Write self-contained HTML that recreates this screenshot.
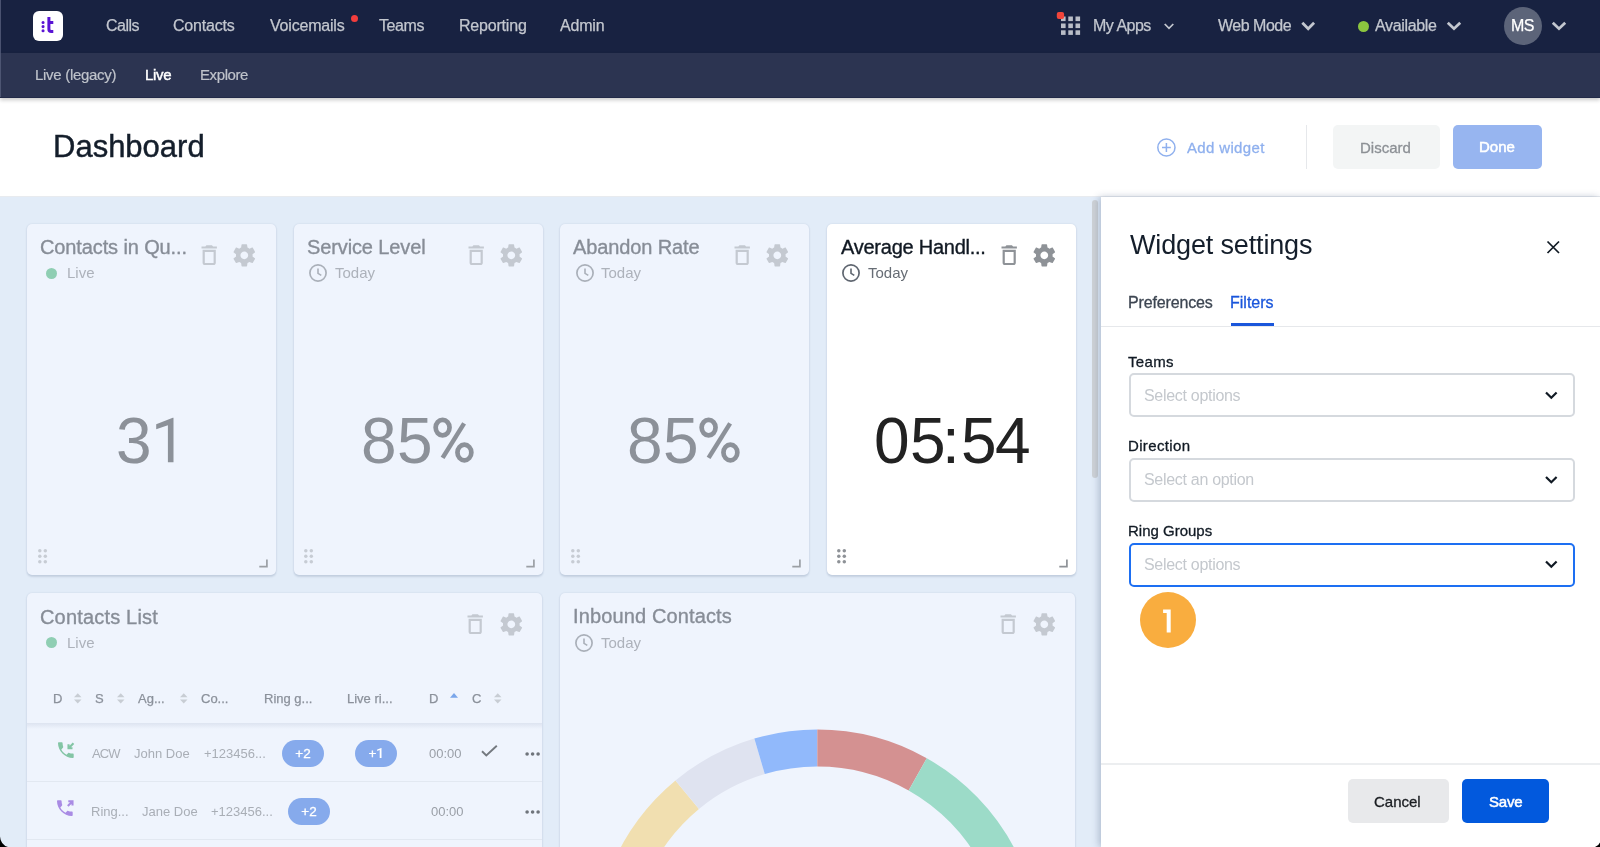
<!DOCTYPE html>
<html><head><meta charset="utf-8">
<style>
*{box-sizing:border-box;margin:0;padding:0}
html,body{width:1600px;height:847px;overflow:hidden;background:#e2ecf8;font-family:"Liberation Sans",sans-serif}
.a{position:absolute}
.t{position:absolute;white-space:nowrap;line-height:1;will-change:transform}
svg{position:absolute;overflow:visible}
#nav{left:0;top:0;width:1600px;height:53px;background:#182241}
#sub{left:0;top:53px;width:1600px;height:44.5px;background:#2c3451;box-shadow:0 2px 4px rgba(0,0,0,.22);z-index:2;border-bottom:1px solid #222a48}
.nv{font-size:16px;color:#c3c7cf;letter-spacing:-0.2px;-webkit-text-stroke:0.25px currentColor}
.sv{font-size:15px;color:#bfc3cb;letter-spacing:-0.3px;-webkit-text-stroke:0.2px currentColor}
#hdr{left:0;top:97px;width:1600px;height:100px;background:#fff;border-bottom:1px solid #e8ebef}
.card{position:absolute;background:#eff4fd;border-radius:5px;box-shadow:0 0 2px rgba(50,70,110,.11),0 1.5px 2px rgba(50,70,110,.15)}
.ttl{font-size:20px;color:#878d97;letter-spacing:-0.12px;-webkit-text-stroke:0.35px currentColor}
.sub2{font-size:15px;color:#adb2bb}
.big{font-size:64px;color:#8c9199}
#panel{left:1101.4px;top:197px;width:498.6px;height:650px;background:#fff;box-shadow:-2px 0 7px rgba(40,60,100,.28)}
.lbl{font-size:15px;color:#111a24;-webkit-text-stroke:0.3px currentColor}
.inp{position:absolute;left:27.5px;width:446.5px;height:44px;border:2px solid #d5d9de;border-radius:5px;background:#fff}
.ph{font-size:16px;color:#c4c8cd;letter-spacing:-0.3px}
.th{font-size:13px;color:#8b919b;-webkit-text-stroke:0.25px currentColor}
.td{font-size:13px;color:#a9aeb6}
.pill{position:absolute;height:26.5px;width:42px;border-radius:14px;background:#86aaec;color:#fff;font-size:13.5px;text-align:center;line-height:28px;-webkit-text-stroke:0.3px #fff;will-change:transform}
</style></head><body>

<!-- top nav -->
<div id="nav" class="a">
  <div class="a" style="left:0;top:0;width:1px;height:53px;background:#4a5270"></div>
  <div class="a" style="left:33px;top:11px;width:30px;height:29.5px;background:#fff;border-radius:6px"></div>
  <svg style="left:0;top:0" width="80" height="53"><path d="M44.6 22.5a1.55 1.55 0 1 1-3.1 0a1.55 1.55 0 1 1 3.1 0M44.6 26.6a1.55 1.55 0 1 1-3.1 0a1.55 1.55 0 1 1 3.1 0M44.6 30.7a1.55 1.55 0 1 1-3.1 0a1.55 1.55 0 1 1 3.1 0" fill="#5a14d4"/><path d="M48.9 16.9V29.2q0 2.3 2.3 2.3H53.3M47.4 22.5H53.3" fill="none" stroke="#5a14d4" stroke-width="3"/></svg>
  <svg style="left:1056px;top:11px;fill:#b9bdc7" width="26" height="26"><rect x="5" y="5.5" width="4.6" height="4.6"/><rect x="12.3" y="5.5" width="4.6" height="4.6"/><rect x="19.5" y="5.5" width="4.6" height="4.6"/><rect x="5" y="12.5" width="4.6" height="4.6"/><rect x="12.3" y="12.5" width="4.6" height="4.6"/><rect x="19.5" y="12.5" width="4.6" height="4.6"/><rect x="5" y="19.3" width="4.6" height="4.6"/><rect x="12.3" y="19.3" width="4.6" height="4.6"/><rect x="19.5" y="19.3" width="4.6" height="4.6"/><rect x="0.8" y="1" width="7.3" height="7" rx="2" fill="#f0453b"/></svg>
  <svg style="left:0;top:0" width="1600" height="53"><g fill="none" stroke="#c3c7cf" stroke-linecap="square"><path d="M1165.3 24.6L1169 28.3 1172.7 24.6" stroke-width="1.7"/><path d="M1303.3 23.8L1308.2 28.7 1313.1 23.8" stroke-width="2.8"/><path d="M1448.8 23.8L1454 28.7 1459.2 23.8" stroke-width="2.8"/><path d="M1553.8 23.8L1559 28.7 1564.2 23.8" stroke-width="2.8"/></g></svg>
  <div class="t nv" style="left:105.8px;top:18px;letter-spacing:-0.5px">Calls</div>
  <div class="t nv" style="left:172.5px;top:18px">Contacts</div>
  <div class="t nv" style="left:269.5px;top:18px">Voicemails</div>
  <div class="a" style="left:350.5px;top:14.5px;width:7px;height:7px;border-radius:50%;background:#f23d3d"></div>
  <div class="t nv" style="left:379.3px;top:18px;letter-spacing:-0.4px">Teams</div>
  <div class="t nv" style="left:458.5px;top:18px">Reporting</div>
  <div class="t nv" style="left:560px;top:18px">Admin</div>
  <div class="t nv" style="left:1093px;top:18px;letter-spacing:-0.5px">My Apps</div>
  <div class="t nv" style="left:1217.8px;top:18px;letter-spacing:-0.5px">Web Mode</div>
  <div class="a" style="left:1358px;top:20.5px;width:11px;height:11px;border-radius:50%;background:#8cc63f"></div>
  <div class="t nv" style="left:1375px;top:18px;letter-spacing:-0.35px">Available</div>
  <div class="a" style="left:1504px;top:6.5px;width:38px;height:38px;border-radius:50%;background:#5c6479"></div>
  <div class="t" style="left:1511px;top:17.6px;font-size:16px;color:#fff;letter-spacing:-0.6px;-webkit-text-stroke:0.25px #fff">MS</div>
</div>

<!-- sub nav -->
<div id="sub" class="a">
  <div class="a" style="left:0;top:0;width:1px;height:44px;background:#4d5572"></div>
  <div class="t sv" style="left:35px;top:14.1px">Live (legacy)</div>
  <div class="t sv" style="left:144.5px;top:14.1px;color:#fff;-webkit-text-stroke:0.45px #fff">Live</div>
  <div class="t sv" style="left:200px;top:14.1px;letter-spacing:-0.4px">Explore</div>
</div>

<!-- header -->
<div id="hdr" class="a">
  <div class="t" style="left:53px;top:33.5px;font-size:31px;color:#141e2b;-webkit-text-stroke:0.45px currentColor">Dashboard</div>
  <svg style="left:1157px;top:41px" width="20" height="20"><circle cx="9.4" cy="9.5" r="8.6" fill="none" stroke="#8fb0ee" stroke-width="1.5"/><path d="M9.4 5.1V13.9M5 9.5H13.8" stroke="#8fb0ee" stroke-width="1.5"/></svg>
  <div class="t" style="left:1187px;top:42.5px;font-size:15px;color:#8fb0ee;letter-spacing:0.35px;-webkit-text-stroke:0.3px currentColor">Add widget</div>
  <div class="a" style="left:1306px;top:28px;width:1px;height:44px;background:#e6e8eb"></div>
  <div class="a" style="left:1333px;top:28px;width:107px;height:44px;border-radius:5px;background:#f3f5f5"></div>
  <div class="t" style="left:1359.5px;top:42.5px;font-size:15px;color:#8c9095;-webkit-text-stroke:0.3px currentColor">Discard</div>
  <div class="a" style="left:1453px;top:28px;width:89px;height:44px;border-radius:5px;background:#97b5f0"></div>
  <div class="t" style="left:1479px;top:42.5px;font-size:15px;color:#fff;-webkit-text-stroke:0.55px #fff;margin-top:-1px">Done</div>
</div>

<!-- dashboard cards -->
<div class="card" style="left:27px;top:223.5px;width:249px;height:351.5px"></div>
<div class="card" style="left:293.5px;top:223.5px;width:249px;height:351.5px"></div>
<div class="card" style="left:560px;top:223.5px;width:249px;height:351.5px"></div>
<div class="card" style="left:826.5px;top:223.5px;width:249px;height:351.5px;background:#fff"></div>
<div class="card" style="left:27px;top:593px;width:514.5px;height:300px"></div>
<div class="card" style="left:560px;top:593px;width:514.8px;height:300px"></div>



<!-- card 1 -->
<div class="t ttl" style="left:39.5px;top:237px">Contacts in Qu...</div>
<div class="a" style="left:45.5px;top:268px;width:11px;height:11px;border-radius:50%;background:#8fceb3"></div>
<div class="t sub2" style="left:67.3px;top:265.2px">Live</div>
<svg style="left:196px;top:241.7px;fill:#c4c9d1" width="26.4" height="26.4" viewBox="0 0 24 24"><path d="M6 19c0 1.1.9 2 2 2h8c1.1 0 2-.9 2-2V7H6v12zM8 9h8v10H8V9zm7.5-5l-1-1h-5l-1 1H5v2h14V4z"/></svg>
<svg style="left:231.4px;top:241.6px;fill:#c4c9d1" width="26.6" height="26.6" viewBox="0 0 24 24"><path d="M19.43 12.98c.04-.32.07-.64.07-.98s-.03-.66-.07-.98l2.11-1.65c.19-.15.24-.42.12-.64l-2-3.46c-.12-.22-.39-.3-.61-.22l-2.49 1c-.52-.4-1.080-.73-1.69-.98l-.38-2.65C14.46 2.18 14.25 2 14 2h-4c-.25 0-.46.18-.49.42l-.38 2.65c-.61.25-1.17.59-1.690.98l-2.49-1c-.23-.09-.49 0-.61.22l-2 3.46c-.13.22-.07.49.12.64l2.11 1.65c-.04.32-.07.65-.07.98s.03.66.07.98l-2.11 1.65c-.19.15-.24.42-.12.64l2 3.46c.12.22.39.3.61.22l2.49-1c.52.4 1.08.73 1.69.98l.38 2.65c.03.24.24.42.49.42h4c.25 0 .46-.18.49-.42l.38-2.65c.61-.25 1.17-.59 1.69-.98l2.49 1c.23.09.49 0 .61-.22l2-3.46c.12-.22.07-.49-.12-.64l-2.11-1.65zM12 15.5c-1.93 0-3.5-1.57-3.5-3.5s1.57-3.5 3.5-3.5 3.5 1.57 3.5 3.5-1.57 3.5-3.5 3.5z"/></svg>
<div class="t big" style="left:115.9px;top:408.5px">3</div>
<svg style="left:0;top:0" width="300" height="500"><path d="M173.5 417.8V462.3H167.9V425.2L156.2 429.3V424.2L172.8 417.8Z" fill="#8c9199"/></svg>
<svg style="left:37.7px;top:548.8px;fill:#c7ccd4" width="10" height="15" viewBox="0 0 10 15"><circle cx="1.8" cy="1.8" r="1.75"/><circle cx="7.3" cy="1.8" r="1.75"/><circle cx="1.8" cy="7.3" r="1.75"/><circle cx="7.3" cy="7.3" r="1.75"/><circle cx="1.8" cy="12.8" r="1.75"/><circle cx="7.3" cy="12.8" r="1.75"/></svg>
<svg style="left:259px;top:558.5px" width="10" height="10"><path d="M0.3 7.6H7.9V0.5" fill="none" stroke="#9b9fa5" stroke-width="1.7"/></svg>

<!-- card 2 -->
<div class="t ttl" style="left:307px;top:237px">Service Level</div>
<svg style="left:309px;top:264.2px;color:#aab0b9" width="18" height="18" viewBox="0 0 18 18"><circle cx="9" cy="9" r="8.1" fill="none" stroke="currentColor" stroke-width="1.7"/><path d="M9 4.6V9.4L12.3 11.4" fill="none" stroke="currentColor" stroke-width="1.6"/></svg>
<div class="t sub2" style="left:334.5px;top:265.2px">Today</div>
<svg style="left:462.5px;top:241.7px;fill:#c4c9d1" width="26.4" height="26.4" viewBox="0 0 24 24"><path d="M6 19c0 1.1.9 2 2 2h8c1.1 0 2-.9 2-2V7H6v12zM8 9h8v10H8V9zm7.5-5l-1-1h-5l-1 1H5v2h14V4z"/></svg>
<svg style="left:497.9px;top:241.6px;fill:#c4c9d1" width="26.6" height="26.6" viewBox="0 0 24 24"><path d="M19.43 12.98c.04-.32.07-.64.07-.98s-.03-.66-.07-.98l2.11-1.65c.19-.15.24-.42.12-.64l-2-3.46c-.12-.22-.39-.3-.61-.22l-2.49 1c-.52-.4-1.080-.73-1.69-.98l-.38-2.65C14.46 2.18 14.25 2 14 2h-4c-.25 0-.46.18-.49.42l-.38 2.65c-.61.25-1.17.59-1.690.98l-2.49-1c-.23-.09-.49 0-.61.22l-2 3.46c-.13.22-.07.49.12.64l2.11 1.65c-.04.32-.07.65-.07.98s.03.66.07.98l-2.11 1.65c-.19.15-.24.42-.12.64l2 3.46c.12.22.39.3.61.22l2.49-1c.52.4 1.08.73 1.69.98l.38 2.65c.03.24.24.42.49.42h4c.25 0 .46-.18.49-.42l.38-2.65c.61-.25 1.17-.59 1.69-.98l2.49 1c.23.09.49 0 .61-.22l2-3.46c.12-.22.07-.49-.12-.64l-2.11-1.65zM12 15.5c-1.93 0-3.5-1.57-3.5-3.5s1.57-3.5 3.5-3.5 3.5 1.57 3.5 3.5-1.57 3.5-3.5 3.5z"/></svg>
<div class="t big" style="left:361px;top:408.5px">8</div><div class="t big" style="left:397px;top:408.5px">5</div>
<svg style="left:0;top:0" width="1100" height="500"><g fill="none" stroke="#8c9199" stroke-width="4.7"><ellipse cx="442.6" cy="427.6" rx="6.95" ry="7.8"/><ellipse cx="464.4" cy="452.5" rx="6.95" ry="7.8"/><path d="M464.1 423.4L442.6 457.9" stroke-width="4.5"/></g></svg>
<svg style="left:304.2px;top:548.8px;fill:#c7ccd4" width="10" height="15" viewBox="0 0 10 15"><circle cx="1.8" cy="1.8" r="1.75"/><circle cx="7.3" cy="1.8" r="1.75"/><circle cx="1.8" cy="7.3" r="1.75"/><circle cx="7.3" cy="7.3" r="1.75"/><circle cx="1.8" cy="12.8" r="1.75"/><circle cx="7.3" cy="12.8" r="1.75"/></svg>
<svg style="left:525.5px;top:558.5px" width="10" height="10"><path d="M0.3 7.6H7.9V0.5" fill="none" stroke="#9b9fa5" stroke-width="1.7"/></svg>

<!-- card 3 -->
<div class="t ttl" style="left:573px;top:237px">Abandon Rate</div>
<svg style="left:575.5px;top:264.2px;color:#aab0b9" width="18" height="18" viewBox="0 0 18 18"><circle cx="9" cy="9" r="8.1" fill="none" stroke="currentColor" stroke-width="1.7"/><path d="M9 4.6V9.4L12.3 11.4" fill="none" stroke="currentColor" stroke-width="1.6"/></svg>
<div class="t sub2" style="left:601px;top:265.2px">Today</div>
<svg style="left:729px;top:241.7px;fill:#c4c9d1" width="26.4" height="26.4" viewBox="0 0 24 24"><path d="M6 19c0 1.1.9 2 2 2h8c1.1 0 2-.9 2-2V7H6v12zM8 9h8v10H8V9zm7.5-5l-1-1h-5l-1 1H5v2h14V4z"/></svg>
<svg style="left:764.4px;top:241.6px;fill:#c4c9d1" width="26.6" height="26.6" viewBox="0 0 24 24"><path d="M19.43 12.98c.04-.32.07-.64.07-.98s-.03-.66-.07-.98l2.11-1.65c.19-.15.24-.42.12-.64l-2-3.46c-.12-.22-.39-.3-.61-.22l-2.49 1c-.52-.4-1.080-.73-1.69-.98l-.38-2.65C14.46 2.18 14.25 2 14 2h-4c-.25 0-.46.18-.49.42l-.38 2.65c-.61.25-1.17.59-1.690.98l-2.49-1c-.23-.09-.49 0-.61.22l-2 3.46c-.13.22-.07.49.12.64l2.11 1.65c-.04.32-.07.65-.07.98s.03.66.07.98l-2.11 1.65c-.19.15-.24.42-.12.64l2 3.46c.12.22.39.3.61.22l2.49-1c.52.4 1.08.73 1.69.98l.38 2.65c.03.24.24.42.49.42h4c.25 0 .46-.18.49-.42l.38-2.65c.61-.25 1.17-.59 1.69-.98l2.49 1c.23.09.49 0 .61-.22l2-3.46c.12-.22.07-.49-.12-.64l-2.11-1.65zM12 15.5c-1.93 0-3.5-1.57-3.5-3.5s1.57-3.5 3.5-3.5 3.5 1.57 3.5 3.5-1.57 3.5-3.5 3.5z"/></svg>
<div class="t big" style="left:627px;top:408.5px">8</div><div class="t big" style="left:663px;top:408.5px">5</div>
<svg style="left:0;top:0" width="1100" height="500"><g fill="none" stroke="#8c9199" stroke-width="4.7"><ellipse cx="708.6" cy="427.6" rx="6.95" ry="7.8"/><ellipse cx="730.4" cy="452.5" rx="6.95" ry="7.8"/><path d="M730.1 423.4L708.6 457.9" stroke-width="4.5"/></g></svg>
<svg style="left:570.7px;top:548.8px;fill:#c7ccd4" width="10" height="15" viewBox="0 0 10 15"><circle cx="1.8" cy="1.8" r="1.75"/><circle cx="7.3" cy="1.8" r="1.75"/><circle cx="1.8" cy="7.3" r="1.75"/><circle cx="7.3" cy="7.3" r="1.75"/><circle cx="1.8" cy="12.8" r="1.75"/><circle cx="7.3" cy="12.8" r="1.75"/></svg>
<svg style="left:792px;top:558.5px" width="10" height="10"><path d="M0.3 7.6H7.9V0.5" fill="none" stroke="#9b9fa5" stroke-width="1.7"/></svg>

<!-- card 4 (active) -->
<div class="t ttl" style="left:840.5px;top:237px;color:#101822;letter-spacing:-0.25px">Average Handl...</div>
<svg style="left:842px;top:264.2px;color:#5f6670" width="18" height="18" viewBox="0 0 18 18"><circle cx="9" cy="9" r="8.1" fill="none" stroke="currentColor" stroke-width="1.7"/><path d="M9 4.6V9.4L12.3 11.4" fill="none" stroke="currentColor" stroke-width="1.6"/></svg>
<div class="t sub2" style="left:867.8px;top:265.2px;color:#676d75">Today</div>
<svg style="left:995.5px;top:241.7px;fill:#8e9297" width="26.4" height="26.4" viewBox="0 0 24 24"><path d="M6 19c0 1.1.9 2 2 2h8c1.1 0 2-.9 2-2V7H6v12zM8 9h8v10H8V9zm7.5-5l-1-1h-5l-1 1H5v2h14V4z"/></svg>
<svg style="left:1030.9px;top:241.6px;fill:#8e9297" width="26.6" height="26.6" viewBox="0 0 24 24"><path d="M19.43 12.98c.04-.32.07-.64.07-.98s-.03-.66-.07-.98l2.11-1.65c.19-.15.24-.42.12-.64l-2-3.46c-.12-.22-.39-.3-.61-.22l-2.49 1c-.52-.4-1.080-.73-1.69-.98l-.38-2.65C14.46 2.18 14.25 2 14 2h-4c-.25 0-.46.18-.49.42l-.38 2.65c-.61.25-1.17.59-1.690.98l-2.49-1c-.23-.09-.49 0-.61.22l-2 3.46c-.13.22-.07.49.12.64l2.11 1.65c-.04.32-.07.65-.07.98s.03.66.07.98l-2.11 1.65c-.19.15-.24.42-.12.64l2 3.46c.12.22.39.3.61.22l2.49-1c.52.4 1.08.73 1.69.98l.38 2.65c.03.24.24.42.49.42h4c.25 0 .46-.18.49-.42l.38-2.65c.61-.25 1.17-.59 1.69-.98l2.49 1c.23.09.49 0 .61-.22l2-3.46c.12-.22.07-.49-.12-.64l-2.11-1.65zM12 15.5c-1.93 0-3.5-1.57-3.5-3.5s1.57-3.5 3.5-3.5 3.5 1.57 3.5 3.5-1.57 3.5-3.5 3.5z"/></svg>
<div class="t big" style="left:874.4px;top:409px;color:#222">0</div><div class="t big" style="left:910.4px;top:409px;color:#222">5</div><div class="t big" style="left:942.3px;top:409px;color:#222">:</div><div class="t big" style="left:960.5px;top:409px;color:#222">5</div><div class="t big" style="left:994.5px;top:409px;color:#222">4</div>
<svg style="left:837.2px;top:548.8px;fill:#8e9297" width="10" height="15" viewBox="0 0 10 15"><circle cx="1.8" cy="1.8" r="1.75"/><circle cx="7.3" cy="1.8" r="1.75"/><circle cx="1.8" cy="7.3" r="1.75"/><circle cx="7.3" cy="7.3" r="1.75"/><circle cx="1.8" cy="12.8" r="1.75"/><circle cx="7.3" cy="12.8" r="1.75"/></svg>
<svg style="left:1058.5px;top:558.5px" width="10" height="10"><path d="M0.3 7.6H7.9V0.5" fill="none" stroke="#8e9297" stroke-width="1.7"/></svg>

<!-- contacts list -->
<div class="t ttl" style="left:39.5px;top:606.5px;letter-spacing:0.18px">Contacts List</div>
<div class="a" style="left:45.6px;top:637.4px;width:11px;height:11px;border-radius:50%;background:#8fceb3"></div>
<div class="t sub2" style="left:67.1px;top:635.2px">Live</div>
<svg style="left:462px;top:611px;fill:#c4c9d1" width="26.4" height="26.4" viewBox="0 0 24 24"><path d="M6 19c0 1.1.9 2 2 2h8c1.1 0 2-.9 2-2V7H6v12zM8 9h8v10H8V9zm7.5-5l-1-1h-5l-1 1H5v2h14V4z"/></svg>
<svg style="left:497.5px;top:611px;fill:#c4c9d1" width="26.6" height="26.6" viewBox="0 0 24 24"><path d="M19.43 12.98c.04-.32.07-.64.07-.98s-.03-.66-.07-.98l2.11-1.65c.19-.15.24-.42.12-.64l-2-3.46c-.12-.22-.39-.3-.61-.22l-2.49 1c-.52-.4-1.080-.73-1.69-.98l-.38-2.65C14.46 2.18 14.25 2 14 2h-4c-.25 0-.46.18-.49.42l-.38 2.65c-.61.25-1.17.59-1.690.98l-2.49-1c-.23-.09-.49 0-.61.22l-2 3.46c-.13.22-.07.49.12.64l2.11 1.65c-.04.32-.07.65-.07.98s.03.66.07.98l-2.11 1.65c-.19.15-.24.42-.12.64l2 3.46c.12.22.39.3.61.22l2.49-1c.52.4 1.08.73 1.69.98l.38 2.65c.03.24.24.42.49.42h4c.25 0 .46-.18.49-.42l.38-2.65c.61-.25 1.17-.59 1.69-.98l2.49 1c.23.09.49 0 .61-.22l2-3.46c.12-.22.07-.49-.12-.64l-2.11-1.65zM12 15.5c-1.93 0-3.5-1.57-3.5-3.5s1.57-3.5 3.5-3.5 3.5 1.57 3.5 3.5-1.57 3.5-3.5 3.5z"/></svg>
<div class="a" style="left:27px;top:722.5px;width:514.5px;height:6px;background:linear-gradient(rgba(40,60,110,.09),rgba(40,60,110,0))"></div>
<div class="t th" style="left:53px;top:692.2px">D</div>
<svg style="left:74px;top:692.5px;fill:#c8cdd4" width="7.5" height="10.7" viewBox="0 0 8 11"><path d="M0 4.3L4 0 8 4.3zM0 6.7L4 11 8 6.7z"/></svg>
<div class="t th" style="left:95px;top:692.2px">S</div>
<svg style="left:116.5px;top:692.5px;fill:#c8cdd4" width="7.5" height="10.7" viewBox="0 0 8 11"><path d="M0 4.3L4 0 8 4.3zM0 6.7L4 11 8 6.7z"/></svg>
<div class="t th" style="left:138px;top:692.2px">Ag...</div>
<svg style="left:179.7px;top:692.5px;fill:#c8cdd4" width="7.5" height="10.7" viewBox="0 0 8 11"><path d="M0 4.3L4 0 8 4.3zM0 6.7L4 11 8 6.7z"/></svg>
<div class="t th" style="left:200.5px;top:692.2px">Co...</div>
<div class="t th" style="left:263.5px;top:692.2px">Ring g...</div>
<div class="t th" style="left:346.5px;top:692.2px">Live ri...</div>
<div class="t th" style="left:429px;top:692.2px">D</div>
<svg style="left:450px;top:692.5px;fill:#7aa6ea" width="8" height="5"><path d="M0 4.7L4 0 8 4.7z"/></svg>
<div class="t th" style="left:471.5px;top:692.2px">C</div>
<svg style="left:494px;top:692.5px;fill:#c8cdd4" width="7.5" height="10.7" viewBox="0 0 8 11"><path d="M0 4.3L4 0 8 4.3zM0 6.7L4 11 8 6.7z"/></svg>

<div class="a" style="left:27px;top:781px;width:514.5px;height:1px;background:#e2e8f1"></div>
<div class="a" style="left:27px;top:839px;width:514.5px;height:1px;background:#e2e8f1"></div>
<svg style="left:57px;top:742px" width="18" height="17" viewBox="0 0 18 17"><path d="M1 1.3c0-.6.4-1 1-1h2.6c.6 0 1 .4 1 1 0 1.2.2 2.4.6 3.5.1.4 0 .7-.3 1L4.3 7.4c1.2 2.3 3 4.2 5.3 5.3l1.6-1.6c.3-.3.7-.4 1-.2 1.1.4 2.3.6 3.5.6.6 0 1 .4 1 1V15c0 .6-.4 1-1 1C8 16 1 9 1 1.3z" fill="#83c5a5"/><path d="M16.5 1.2L11.8 5.9M11.5 2.2V6.2H15.5" fill="none" stroke="#83c5a5" stroke-width="2.1"/></svg>
<div class="t td" style="left:92px;top:746.8px;letter-spacing:-0.9px">ACW</div>
<div class="t td" style="left:134px;top:746.8px">John Doe</div>
<div class="t td" style="left:203.8px;top:746.8px">+123456...</div>
<div class="pill" style="left:281.7px;top:740px">+2</div>
<div class="pill" style="left:354.7px;top:740px;text-align:left;padding-left:13.6px">+</div><svg style="left:0;top:0" width="400" height="800"><path d="M381.5 747.9V758H379.7V750.1L377.2 751V749.4L381.2 747.9Z" fill="#fff"/></svg>
<div class="t td" style="left:429px;top:746.8px;color:#9a9fa7">00:00</div>
<svg style="left:481px;top:745px" width="17" height="12"><path d="M1 6.3L5.3 10.5 15.8 0.7" fill="none" stroke="#74797f" stroke-width="1.9"/></svg>
<svg style="left:525px;top:752px;fill:#6f747b" width="16" height="4"><circle cx="2.1" cy="2" r="1.8"/><circle cx="7.6" cy="2" r="1.8"/><circle cx="13.1" cy="2" r="1.8"/></svg>

<svg style="left:55.7px;top:800px" width="18" height="17" viewBox="0 0 18 17"><path d="M1 1.3c0-.6.4-1 1-1h2.6c.6 0 1 .4 1 1 0 1.2.2 2.4.6 3.5.1.4 0 .7-.3 1L4.3 7.4c1.2 2.3 3 4.2 5.3 5.3l1.6-1.6c.3-.3.7-.4 1-.2 1.1.4 2.3.6 3.5.6.6 0 1 .4 1 1V15c0 .6-.4 1-1 1C8 16 1 9 1 1.3z" fill="#a98be4"/><path d="M11.8 5.9L16.3 1.4M12.3 1.2H16.5V5.4" fill="none" stroke="#a98be4" stroke-width="2.1"/></svg>
<div class="t td" style="left:90.5px;top:804.5px">Ring...</div>
<div class="t td" style="left:141.5px;top:804.5px">Jane Doe</div>
<div class="t td" style="left:211px;top:804.5px">+123456...</div>
<div class="pill" style="left:288.4px;top:798px">+2</div>
<div class="t td" style="left:430.5px;top:804.5px;color:#9a9fa7">00:00</div>
<svg style="left:525px;top:809.5px;fill:#6f747b" width="16" height="4"><circle cx="2.1" cy="2" r="1.8"/><circle cx="7.6" cy="2" r="1.8"/><circle cx="13.1" cy="2" r="1.8"/></svg>

<!-- inbound contacts -->
<div class="t ttl" style="left:573px;top:606.2px;letter-spacing:0.13px">Inbound Contacts</div>
<svg style="left:575px;top:633.8px;color:#aab0b9" width="18" height="18" viewBox="0 0 18 18"><circle cx="9" cy="9" r="8.1" fill="none" stroke="currentColor" stroke-width="1.7"/><path d="M9 4.6V9.4L12.3 11.4" fill="none" stroke="currentColor" stroke-width="1.6"/></svg>
<div class="t sub2" style="left:600.5px;top:635px">Today</div>
<svg style="left:995px;top:611px;fill:#c4c9d1" width="26.4" height="26.4" viewBox="0 0 24 24"><path d="M6 19c0 1.1.9 2 2 2h8c1.1 0 2-.9 2-2V7H6v12zM8 9h8v10H8V9zm7.5-5l-1-1h-5l-1 1H5v2h14V4z"/></svg>
<svg style="left:1030.5px;top:611px;fill:#c4c9d1" width="26.6" height="26.6" viewBox="0 0 24 24"><path d="M19.43 12.98c.04-.32.07-.64.07-.98s-.03-.66-.07-.98l2.11-1.65c.19-.15.24-.42.12-.64l-2-3.46c-.12-.22-.39-.3-.61-.22l-2.49 1c-.52-.4-1.080-.73-1.69-.98l-.38-2.65C14.46 2.18 14.25 2 14 2h-4c-.25 0-.46.18-.49.42l-.38 2.65c-.61.25-1.17.59-1.690.98l-2.49-1c-.23-.09-.49 0-.61.22l-2 3.46c-.13.22-.07.49.12.64l2.11 1.65c-.04.32-.07.65-.07.98s.03.66.07.98l-2.11 1.65c-.19.15-.24.42-.12.64l2 3.46c.12.22.39.3.61.22l2.49-1c.52.4 1.08.73 1.69.98l.38 2.65c.03.24.24.42.49.42h4c.25 0 .46-.18.49-.42l.38-2.65c.61-.25 1.17-.59 1.69-.98l2.49 1c.23.09.49 0 .61-.22l2-3.46c.12-.22.07-.49-.12-.64l-2.11-1.65zM12 15.5c-1.93 0-3.5-1.57-3.5-3.5s1.57-3.5 3.5-3.5 3.5 1.57 3.5 3.5-1.57 3.5-3.5 3.5z"/></svg>
<svg style="left:0;top:0" width="1600" height="847"><path d="M595.15 971.94A223 223 0 0 1 675.45 780.43L698.99 808.98A186 186 0 0 0 632.01 968.71Z" fill="#f1dfb0"/><path d="M675.45 780.43A223 223 0 0 1 754.34 738.57L764.78 774.07A186 186 0 0 0 698.99 808.98Z" fill="#dfe3f0"/><path d="M754.34 738.57A223 223 0 0 1 817.30 729.50L817.30 766.50A186 186 0 0 0 764.78 774.07Z" fill="#91b9fb"/><path d="M817.30 729.50A223 223 0 0 1 926.77 758.22L908.61 790.45A186 186 0 0 0 817.30 766.50Z" fill="#d49191"/><path d="M926.77 758.22A223 223 0 0 1 1039.45 971.94L1002.59 968.71A186 186 0 0 0 908.61 790.45Z" fill="#9cdbc8"/></svg>

<!-- scrollbar -->
<div class="a" style="left:1091.5px;top:200px;width:6.5px;height:278px;border-radius:4px;background:#cdd1d6"></div>

<!-- panel -->
<div id="panel" class="a">
  <div class="t" style="left:28.5px;top:34.5px;font-size:27px;letter-spacing:-0.15px;color:#141e2b">Widget settings</div>
  <div class="t" style="left:27px;top:97.5px;font-size:16px;color:#3d4652;letter-spacing:-0.15px;-webkit-text-stroke:0.3px currentColor">Preferences</div>
  <div class="t" style="left:129px;top:97.5px;font-size:16px;color:#1a56db;-webkit-text-stroke:0.3px currentColor">Filters</div>
  <div class="a" style="left:129.5px;top:126px;width:43.5px;height:3px;background:#1a56db"></div>
  <div class="a" style="left:0;top:129px;width:499px;height:1px;background:#e6e8eb"></div>
  <div class="t lbl" style="left:27px;top:156.7px;letter-spacing:0.35px">Teams</div>
  <div class="inp" style="top:176px"></div>
  <div class="t ph" style="left:43px;top:190.5px">Select options</div>
  <div class="t lbl" style="left:27px;top:241.4px;letter-spacing:0.35px">Direction</div>
  <div class="inp" style="top:260.5px"></div>
  <div class="t ph" style="left:43px;top:275px">Select an option</div>
  <div class="t lbl" style="left:27px;top:325.9px">Ring Groups</div>
  <div class="inp" style="top:345.5px;border-color:#1d6ff2"></div>
  <div class="t ph" style="left:43px;top:359.5px">Select options</div>
  <div class="a" style="left:39px;top:395px;width:56px;height:56px;border-radius:50%;background:#f9ad3f"></div>
  <svg style="left:0;top:0" width="499" height="650"><g fill="none" stroke="#111a24" stroke-width="2"><path d="M446.5 44.5L458 56M458 44.5L446.5 56" stroke-width="1.75"/><path d="M445 195.5L450.3 200.8 455.6 195.5" stroke-width="2.2"/><path d="M445 280L450.3 285.3 455.6 280" stroke-width="2.2"/><path d="M445 364.5L450.3 369.8 455.6 364.5" stroke-width="2.2"/></g></svg>
  <svg style="left:39px;top:395px" width="56" height="56"><path d="M23.1 17.6H30.7V40.5H26.7V20.9H23.1Z" fill="#fff"/></svg>
  <div class="a" style="left:0;top:566px;width:499px;height:2px;background:#eceef0"></div>
  <div class="a" style="left:246.5px;top:582px;width:101px;height:44px;border-radius:5px;background:#e8e9eb"></div>
  <div class="t" style="left:272.5px;top:597px;font-size:15px;color:#1a1d21;-webkit-text-stroke:0.3px currentColor">Cancel</div>
  <div class="a" style="left:361px;top:582px;width:87px;height:44px;border-radius:5px;background:#0259dd"></div>
  <div class="t" style="left:387.5px;top:597px;font-size:15px;color:#fff;letter-spacing:-0.2px;-webkit-text-stroke:0.5px #fff">Save</div>
</div>


<svg style="left:0;top:830px" width="14" height="17"><path d="M0 6.5Q0.6 14.8 8 17H0Z" fill="#000"/></svg>
<svg style="left:1590px;top:837px" width="10" height="10"><path d="M10 5.5Q8.5 9 5 10H10Z" fill="#000"/></svg>
</body></html>
